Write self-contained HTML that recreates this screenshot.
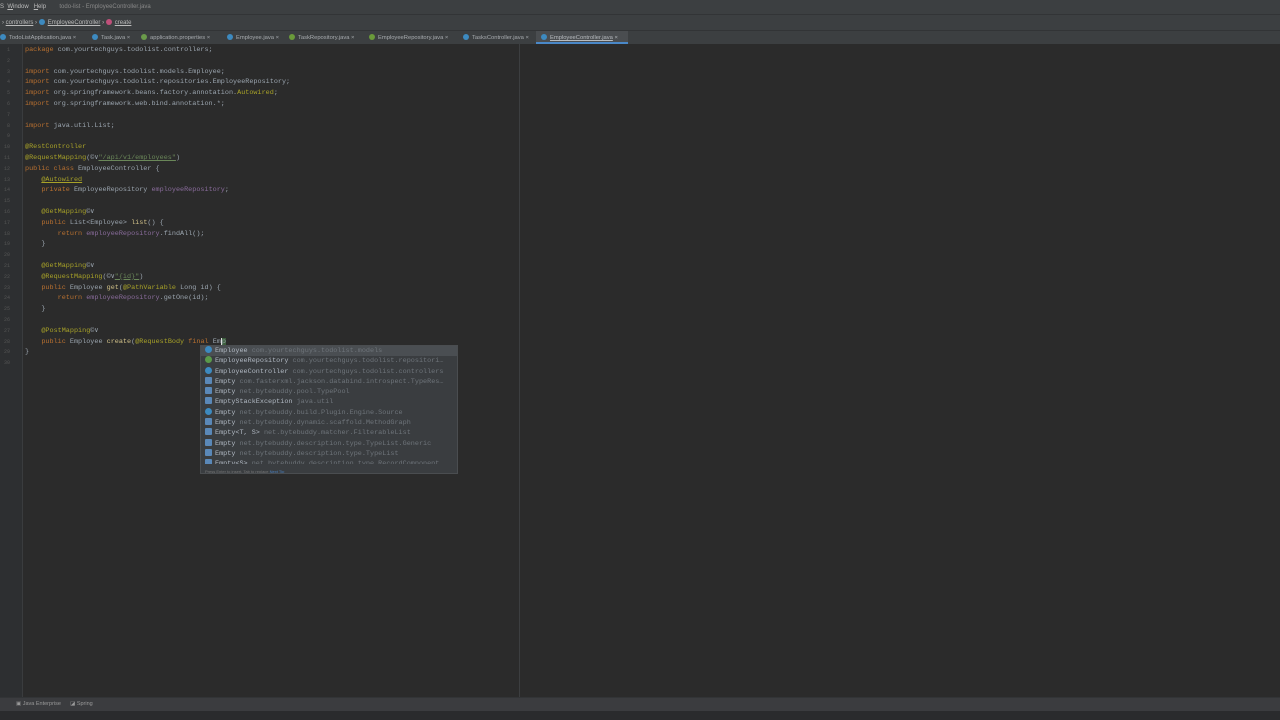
<!DOCTYPE html>
<html><head><meta charset="utf-8"><style>
*{margin:0;padding:0;box-sizing:border-box}
body{width:1280px;height:720px;background:#2b2b2b;overflow:hidden;position:relative;font-family:"Liberation Sans",sans-serif}
.bar{position:absolute;left:0;width:1280px;background:#3c3f41}
.t{position:absolute;font-size:6px;color:#a0a4a8;white-space:nowrap}
.code{position:absolute;left:25px;top:45px;font-family:"Liberation Mono",monospace;font-size:6.8px;line-height:10.8px;color:#9aa4ae;white-space:pre}
.k{color:#b87030}.a{color:#a8a228}.f{color:#8a6c9c}.s{color:#6a8759;text-decoration:underline}.m{color:#d0c088}
.ln{position:absolute;left:0;top:45px;width:10px;font-family:"Liberation Mono",monospace;font-size:5px;line-height:10.8px;color:#555;text-align:right;white-space:pre}
.dot{display:inline-block;width:6px;height:6px;border-radius:50%;vertical-align:-1px;margin-right:3px}
.pop{position:absolute;left:200px;top:345px;width:258px;height:129px;background:#3a3d40;border:1px solid #4a4d50;font-family:"Liberation Mono",monospace;font-size:6.8px;line-height:10.3px;color:#b0b8c2;overflow:hidden}
.pop div{padding-left:4px;white-space:nowrap;height:10.3px;overflow:hidden}
.pop .g{color:#6e747a}
.ic{display:inline-block;width:7px;height:7px;border-radius:50%;background:#3d8ac0;vertical-align:-1px;margin-right:3px}
.ig{background:#5a9a4a}.ib{border-radius:1px;background:#5a88b8}
.tab{position:absolute;top:34px;font-size:5.8px;color:#a8acb0;white-space:nowrap}
</style></head><body>
<div class="bar" style="top:0;height:14px;background:#3c3f41"></div>
<div class="t" style="left:0;top:4px;color:#bbb">S&nbsp; <u>W</u>indow&nbsp;&nbsp; <u>H</u>elp &nbsp;&nbsp;&nbsp;&nbsp;&nbsp;&nbsp; <span style="color:#888">todo-list - EmployeeController.java</span></div>
<div class="bar" style="top:14px;height:16px;border-top:1px solid #323436"></div>
<div class="t" style="left:2px;top:19px;color:#bbb">› <u>controllers</u> › <span class="dot" style="background:#3d8ac0"></span><u>EmployeeController</u> › <span class="dot" style="background:#c0507a"></span><u>create</u></div>
<div class="bar" style="top:30px;height:14px;border-top:1px solid #323436"></div>
<div class="tab" style="left:0"><span class="dot" style="background:#3d8ac0"></span>TodoListApplication.java ×</div>
<div class="tab" style="left:92px"><span class="dot" style="background:#3d8ac0"></span>Task.java ×</div>
<div class="tab" style="left:141px"><span class="dot" style="background:#6a9a4a"></span>application.properties ×</div>
<div class="tab" style="left:227px"><span class="dot" style="background:#3d8ac0"></span>Employee.java ×</div>
<div class="tab" style="left:289px"><span class="dot" style="background:#6a9a3a"></span>TaskRepository.java ×</div>
<div class="tab" style="left:369px"><span class="dot" style="background:#6a9a3a"></span>EmployeeRepository.java ×</div>
<div class="tab" style="left:463px"><span class="dot" style="background:#3d8ac0"></span>TasksController.java ×</div>
<div style="position:absolute;left:536px;top:31px;width:92px;height:13px;background:#4a4d50;border-bottom:2px solid #4a88c8"></div>
<div class="tab" style="left:541px;color:#b8bcc0"><span class="dot" style="background:#3d8ac0"></span><u>EmployeeController.java</u> ×</div>
<div style="position:absolute;left:0;top:44px;width:22px;height:653px;background:#2d2f31"></div>
<div style="position:absolute;left:22px;top:44px;width:1px;height:653px;background:#3a3c3e"></div>
<div style="position:absolute;left:519px;top:44px;width:1px;height:653px;background:#3c3e40"></div>
<div class="ln">1
2
3
4
5
6
7
8
9
10
11
12
13
14
15
16
17
18
19
20
21
22
23
24
25
26
27
28
29
30</div>
<div class="code"><span class="k">package</span> com.yourtechguys.todolist.controllers;

<span class="k">import</span> com.yourtechguys.todolist.models.Employee;
<span class="k">import</span> com.yourtechguys.todolist.repositories.EmployeeRepository;
<span class="k">import</span> org.springframework.beans.factory.annotation.<span class="a">Autowired</span>;
<span class="k">import</span> org.springframework.web.bind.annotation.*;

<span class="k">import</span> java.util.List;

<span class="a">@RestController</span>
<span class="a">@RequestMapping</span>(©∨<span class="s">"/api/v1/employees"</span>)
<span class="k">public class</span> EmployeeController {
    <span class="a" style="text-decoration:underline">@Autowired</span>
    <span class="k">private</span> EmployeeRepository <span class="f">employeeRepository</span>;

    <span class="a">@GetMapping</span>©∨
    <span class="k">public</span> List&lt;Employee&gt; <span class="m">list</span>() {
        <span class="k">return</span> <span class="f">employeeRepository</span>.findAll();
    }

    <span class="a">@GetMapping</span>©∨
    <span class="a">@RequestMapping</span>(©∨<span class="s">"{id}"</span>)
    <span class="k">public</span> Employee <span class="m">get</span>(<span class="a">@PathVariable</span> Long id) {
        <span class="k">return</span> <span class="f">employeeRepository</span>.getOne(id);
    }

    <span class="a">@PostMapping</span>©∨
    <span class="k">public</span> Employee <span class="m">create</span>(<span class="a">@RequestBody</span> <span class="k">final</span> Em<span style="border-left:1px solid #ddd;background:#3b5e3b">p</span>
}</div>
<div class="pop">
<div style="background:#4a4e52"><span class="ic"></span>Employee <span class="g">com.yourtechguys.todolist.models</span></div>
<div><span class="ic ig"></span>EmployeeRepository <span class="g">com.yourtechguys.todolist.repositori…</span></div>
<div><span class="ic"></span>EmployeeController <span class="g">com.yourtechguys.todolist.controllers</span></div>
<div><span class="ic ib"></span>Empty <span class="g">com.fasterxml.jackson.databind.introspect.TypeRes…</span></div>
<div><span class="ic ib"></span>Empty <span class="g">net.bytebuddy.pool.TypePool</span></div>
<div><span class="ic ib"></span>EmptyStackException <span class="g">java.util</span></div>
<div><span class="ic"></span>Empty <span class="g">net.bytebuddy.build.Plugin.Engine.Source</span></div>
<div><span class="ic ib"></span>Empty <span class="g">net.bytebuddy.dynamic.scaffold.MethodGraph</span></div>
<div><span class="ic ib"></span>Empty&lt;T, S&gt; <span class="g">net.bytebuddy.matcher.FilterableList</span></div>
<div><span class="ic ib"></span>Empty <span class="g">net.bytebuddy.description.type.TypeList.Generic</span></div>
<div><span class="ic ib"></span>Empty <span class="g">net.bytebuddy.description.type.TypeList</span></div>
<div style="height:5px"><span class="ic ib"></span>Empty&lt;S&gt; <span class="g">net.bytebuddy.description.type.RecordComponent</span></div>
<div style="font-family:'Liberation Sans',sans-serif;font-size:4px;color:#777;padding-top:3px;height:12px">Press Enter to insert, Tab to replace <span style="color:#4a80c0">Next Tip</span></div>
</div>
<div class="bar" style="top:697px;height:14px;background:#3b3c3f;border-top:1px solid #323436"></div>
<div class="t" style="left:16px;top:701px;font-size:5.5px;color:#999">▣ Java Enterprise &nbsp;&nbsp;&nbsp;&nbsp; ◪ Spring</div>
<div style="position:absolute;left:0;top:711px;width:1280px;height:9px;background:#2a2b2d"></div>
</body></html>
